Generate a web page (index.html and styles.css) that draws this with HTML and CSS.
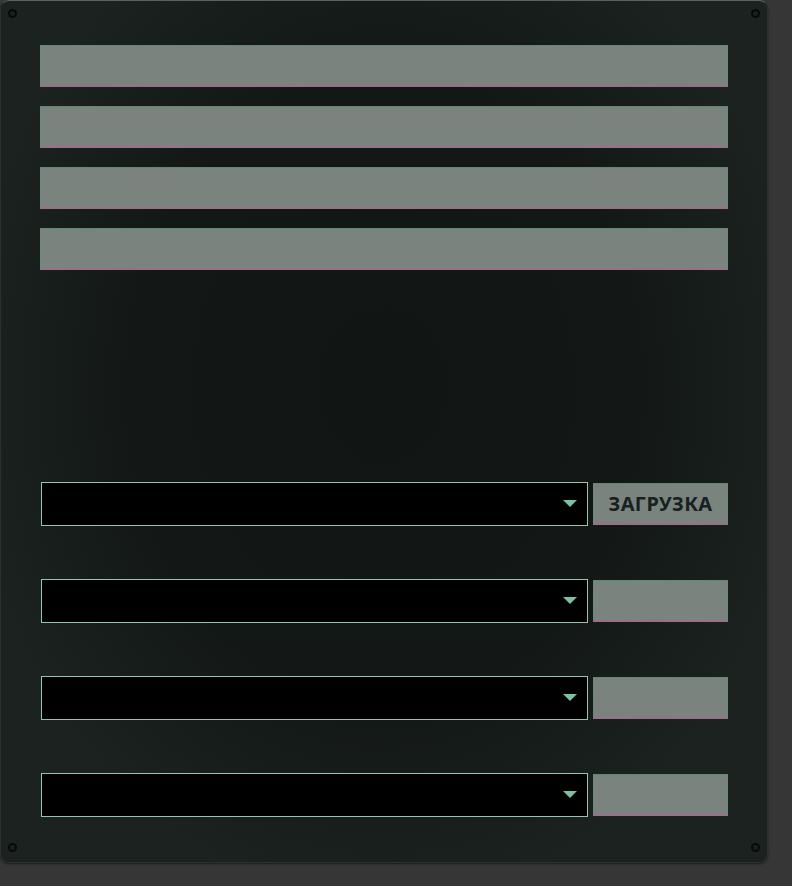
FILE: index.html
```html
<!DOCTYPE html>
<html lang="ru">
<head>
<meta charset="utf-8">
<link rel="stylesheet" href="styles.css">
</head>
<body>
<div class="panel">
  <span class="screw tl"></span><span class="screw tr"></span>
  <span class="screw bl"></span><span class="screw br"></span>
  <div class="fields">
    <div class="field"></div>
    <div class="field"></div>
    <div class="field"></div>
    <div class="field"></div>
  </div>
  <div class="rows">
    <div class="row">
      <div class="select"><span class="arrow"></span></div>
      <div class="btn">ЗАГРУЗКА</div>
    </div>
    <div class="row">
      <div class="select"><span class="arrow"></span></div>
      <div class="btn"></div>
    </div>
    <div class="row">
      <div class="select"><span class="arrow"></span></div>
      <div class="btn"></div>
    </div>
    <div class="row">
      <div class="select"><span class="arrow"></span></div>
      <div class="btn"></div>
    </div>
  </div>
</div>
</body>
</html>
```
FILE: styles.css
```css
html, body {
  margin: 0;
  padding: 0;
  background: #363636;
}
body {
  width: 792px;
  height: 886px;
  font-family: "Noto Sans", "DejaVu Sans", sans-serif;
}
.panel {
  position: relative;
  box-sizing: border-box;
  width: 768px;
  height: 863px;
  border-radius: 9px;
  border: 1px solid #2a312e;
  border-top-color: #58645e;
  background:
    radial-gradient(ellipse 55% 60% at 50% 45%, #111514 0%, #131816 60%, rgba(19,24,22,0) 100%),
    #1b2220;
  box-shadow: 0 1px 2px rgba(0,0,0,0.5);
  padding: 44px 39px 0 39px;
  display: flex;
  flex-direction: column;
}
.screw {
  position: absolute;
  box-sizing: border-box;
  width: 9px;
  height: 9px;
  border-radius: 50%;
  background: #1a201e;
  border: 2px solid #080a09;
}
.screw.tl { left: 7px; top: 8px; }
.screw.tr { right: 7px; top: 8px; }
.screw.bl { left: 7px; bottom: 10px; }
.screw.br { right: 7px; bottom: 10px; }
.fields {
  display: flex;
  flex-direction: column;
  gap: 19px;
}
.field {
  box-sizing: border-box;
  height: 42px;
  background: #7b837f;
  border-top: 1px solid #5f8a72;
  border-left: 1px solid #6c8a7a;
  border-right: 1px solid #6c8a7a;
  border-bottom: 2px solid #9a6f8a;
}
.rows {
  margin-top: 212px;
  display: flex;
  flex-direction: column;
  gap: 53px;
  padding-left: 1px;
}
.row {
  display: flex;
  align-items: center;
  gap: 5px;
  height: 44px;
}
.select {
  position: relative;
  box-sizing: border-box;
  width: 547px;
  height: 44px;
  background: #000;
  border: 1px solid #93c6ae;
}
.arrow {
  position: absolute;
  right: 10px;
  top: 17px;
  width: 0;
  height: 0;
  border-left: 7px solid transparent;
  border-right: 7px solid transparent;
  border-top: 7px solid #7cc2a2;
}
.btn {
  box-sizing: border-box;
  width: 135px;
  height: 42px;
  background: #7b837f;
  border-top: 1px solid #5f8a72;
  border-left: 1px solid #6c8a7a;
  border-right: 1px solid #6c8a7a;
  border-bottom: 2px solid #9a6f8a;
  display: flex;
  align-items: center;
  justify-content: center;
  color: #17211f;
  font-weight: 700;
  font-size: 20px;
  letter-spacing: 0.3px;
}
```
